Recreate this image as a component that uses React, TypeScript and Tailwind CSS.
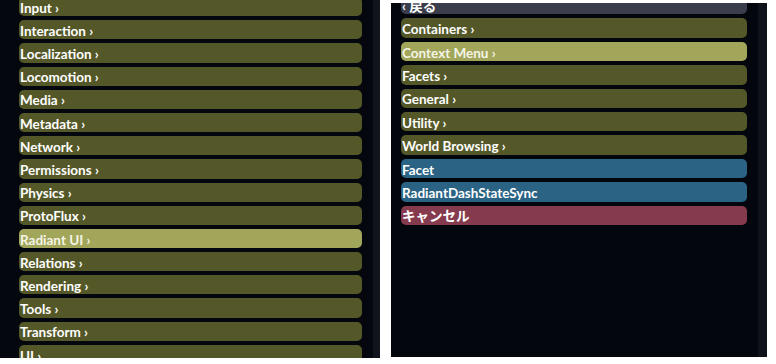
import React from "react"

type Row = { label: string; tone?: "olive" | "hi" | "blue" | "red" | "back" }

const LEFT: Row[] = [
  { label: "Input ›" },
  { label: "Interaction ›" },
  { label: "Localization ›" },
  { label: "Locomotion ›" },
  { label: "Media ›" },
  { label: "Metadata ›" },
  { label: "Network ›" },
  { label: "Permissions ›" },
  { label: "Physics ›" },
  { label: "ProtoFlux ›" },
  { label: "Radiant UI ›", tone: "hi" },
  { label: "Relations ›" },
  { label: "Rendering ›" },
  { label: "Tools ›" },
  { label: "Transform ›" },
  { label: "UI ›" },
]

const RIGHT: Row[] = [
  { label: "‹ 戻る", tone: "back" },
  { label: "Containers ›" },
  { label: "Context Menu ›", tone: "hi" },
  { label: "Facets ›" },
  { label: "General ›" },
  { label: "Utility ›" },
  { label: "World Browsing ›" },
  { label: "Facet", tone: "blue" },
  { label: "RadiantDashStateSync", tone: "blue" },
  { label: "キャンセル", tone: "red" },
]

const toneClass = {
  olive: "bg-[#545829] text-white",
  hi: "bg-[#a2a65a] text-[#f4f4e6]",
  blue: "bg-[#2a6384] text-white",
  red: "bg-[#863a4d] text-white",
  back: "bg-[#3a3d4b] text-white",
}

function Item({ row, h }: { row: Row; h: string }) {
  return (
    <div
      className={`${h} shrink-0 rounded-[5px] pl-[1px] flex items-end text-[13.5px] font-bold leading-[14px] pb-[1.5px] ${toneClass[row.tone ?? "olive"]}`}
    >
      <span className="whitespace-nowrap">{row.label}</span>
    </div>
  )
}

export default function App() {
  return (
    <div
      className="w-[776px] h-[364px] bg-white flex overflow-hidden"
      style={{ fontFamily: 'Lato, "Noto Sans CJK JP", sans-serif' }}
    >
      {/* left menu */}
      <div className="w-[380px] h-[358px] bg-[#04070e] flex overflow-hidden">
        <div className="flex-1 pl-[19px] pr-[11px] overflow-hidden">
          <div className="flex flex-col gap-[4px] -mt-[3px]">
            {LEFT.map((r) => (
              <Item key={r.label} row={r} h="h-[19.2px]" />
            ))}
          </div>
        </div>
        <div className="w-[7px] h-full bg-[#10141d]" />
      </div>

      {/* right menu */}
      <div className="ml-[11px] mt-[3px] w-[376px] h-[354px] bg-[#03060d] flex overflow-hidden">
        <div className="flex-1 pl-[10px] pr-[11px] overflow-hidden">
          <div className="flex flex-col gap-[4px] -mt-[8px]">
            {RIGHT.map((r) => (
              <Item key={r.label} row={r} h="h-[19.4px]" />
            ))}
          </div>
        </div>
        <div className="w-[9px] h-full bg-[#0f121b]" />
      </div>
    </div>
  )
}
